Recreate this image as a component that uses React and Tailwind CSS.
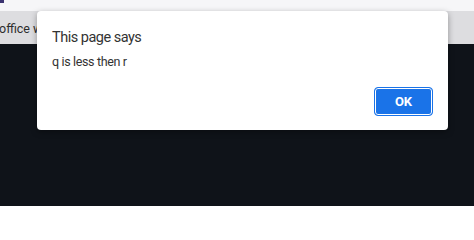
import React from 'react';

export default function App() {
  return (
    <div className="relative w-[474px] h-[206px] overflow-hidden flex flex-col" style={{ fontFamily: 'Roboto, "Liberation Sans", sans-serif' }}>
      {/* Browser chrome */}
      <div className="h-[11px] bg-[#f6f6f8] relative">
        <div className="absolute left-0 top-0 w-[4px] h-[3px] bg-[#3b3370]" />
      </div>
      <div className="h-[33px] bg-[#dddde0] flex items-center">
        <span className="ml-[-1px] text-[12.5px] text-[#2d2d2d] pt-[3px]">office web</span>
      </div>
      <div className="flex-1 bg-[#0f1319]" />

      {/* Alert dialog */}
      <div className="absolute left-[37px] top-[11px] w-[411px] h-[119px] bg-white rounded-[4px] shadow-[0_2px_6px_rgba(0,0,0,0.35)] px-[15px] pt-[16px] flex flex-col">
        <div className="text-[14.5px] leading-[21px] tracking-[-0.5px] text-[#333333]">This page says</div>
        <div className="mt-[5px] text-[12.5px] leading-[18px] tracking-[-0.35px] text-[#333333]">q is less then r</div>
        <div className="flex justify-end mt-auto mb-[14px]">
          <button className="w-[59px] h-[29px] rounded-[4px] bg-[#1a73e8] border border-[#1a73e8] shadow-[inset_0_0_0_1px_#ffffff] text-white text-[13px] font-bold">
            OK
          </button>
        </div>
      </div>
    </div>
  );
}
